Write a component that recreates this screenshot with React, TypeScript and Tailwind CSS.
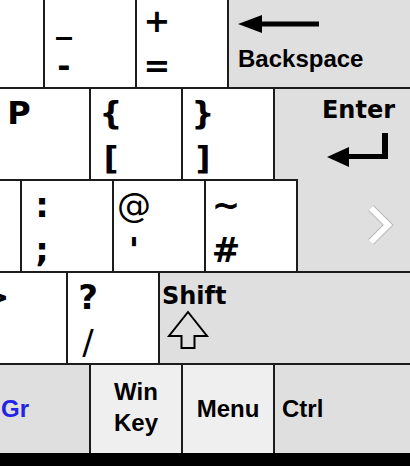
const dv = "font-['DejaVu_Sans',sans-serif]";
const ls = "font-['Liberation_Sans',Arial,sans-serif]";

type KeyProps = {
  top?: string;
  bottom?: string;
  size?: string;
  topClass?: string;
  bottomClass?: string;
  pad?: string;
  col?: string;
};

function SymbolLabels({
  top,
  bottom,
  size = 'text-[32px]',
  topClass = 'font-bold',
  bottomClass = 'font-bold',
  pad = 'pt-[8px]',
  col = 'w-[40px]',
}: KeyProps) {
  return (
    <div className={`${col} ${pad} ${dv} flex flex-col items-center gap-[13px] text-black`}>
      <span className={`h-[32px] leading-[32px] ${size} ${topClass}`}>{top}</span>
      <span className={`h-[32px] leading-[32px] ${size} ${bottomClass}`}>{bottom}</span>
    </div>
  );
}

function BackspaceArrow() {
  return (
    <svg width="82" height="20" viewBox="0 0 82 20">
      <polygon points="0,10 24,1 24,7.5 81,7.5 81,12.5 24,12.5 24,19" fill="#000" />
    </svg>
  );
}

function EnterArrow() {
  return (
    <svg width="62" height="36" viewBox="0 0 62 36">
      <polygon points="0,24 22,14 22,21 55,21 55,0 61,0 61,26 22,26 22,34" fill="#000" />
    </svg>
  );
}

function ShiftArrow() {
  return (
    <svg width="44" height="40" viewBox="0 0 44 40">
      <polygon
        points="22,2 41,26 28.5,26 28.5,38 15.5,38 15.5,26 3,26"
        fill="none"
        stroke="#000"
        strokeWidth="2"
        strokeLinejoin="miter"
      />
    </svg>
  );
}

function Chevron() {
  return (
    <svg width="28" height="42" viewBox="0 0 28 42">
      <polyline points="5,4 22,21 5,38" fill="none" stroke="#b9b9b9" strokeWidth="8" />
      <polyline points="5,4 22,21 5,38" fill="none" stroke="#fff" strokeWidth="6" />
    </svg>
  );
}

export default function App() {
  const line = 'border-[#1c1c1c]';

  return (
    <div className="w-[410px] h-[466px] overflow-hidden bg-white flex flex-col select-none">
      {/* row 1 */}
      <div className={`flex h-[89px] shrink-0 border-b-2 ${line}`}>
        <div className={`w-[45px] border-r-2 ${line} bg-white`} />
        <div className={`w-[92px] border-r-2 ${line} bg-white`}>
          <SymbolLabels top="_" bottom="-" pad="pt-[5px]" col="w-[38px]" />
        </div>
        <div className={`w-[92px] border-r-2 ${line} bg-white`}>
          <SymbolLabels top="+" bottom="=" pad="pt-[5px]" />
        </div>
        <div className="flex-1 bg-[#dfdfdf] flex flex-col pl-[9px] pt-[14px]">
          <BackspaceArrow />
          <span className={`${ls} mt-[13px] text-[24px] leading-none font-bold text-black`}>
            Backspace
          </span>
        </div>
      </div>

      {/* row 2 */}
      <div className="flex h-[90px] shrink-0">
        <div className={`w-[91px] border-r-2 ${line} bg-white`}>
          <div className={`w-[38px] pt-[8px] ${dv} flex flex-col items-center`}>
            <span className="h-[32px] leading-[32px] text-[32px] font-bold text-black">P</span>
          </div>
        </div>
        <div className={`w-[92px] border-r-2 ${line} bg-white`}>
          <SymbolLabels top="{" bottom="[" />
        </div>
        <div className={`w-[92px] border-r-2 ${line} bg-white`}>
          <SymbolLabels top="}" bottom="]" />
        </div>
        <div className="flex-1 bg-[#dfdfdf] flex flex-col items-end pr-[15px] pt-[9px]">
          <span className={`${dv} text-[24px] leading-none font-bold text-black`}>Enter</span>
          <div className="mt-[11px] mr-[6px]">
            <EnterArrow />
          </div>
        </div>
      </div>

      {/* row 3 */}
      <div className={`flex h-[94px] shrink-0 border-b-2 ${line}`}>
        <div className={`w-[22px] border-t-2 border-r-2 ${line} bg-white`} />
        <div className={`w-[92px] border-t-2 border-r-2 ${line} bg-white`}>
          <SymbolLabels top=":" bottom=";" size="text-[34px]" />
        </div>
        <div className={`w-[92px] border-t-2 border-r-2 ${line} bg-white`}>
          <SymbolLabels top="@" bottom="'" topClass="font-normal" size="text-[34px]" />
        </div>
        <div className={`w-[92px] border-t-2 border-r-2 ${line} bg-white`}>
          <SymbolLabels top="~" bottom="#" size="text-[34px]" />
        </div>
        <div className="flex-1 bg-[#dfdfdf] flex items-center justify-end pr-[16px]">
          <Chevron />
        </div>
      </div>

      {/* row 4 */}
      <div className={`flex h-[92px] shrink-0 border-b-2 ${line}`}>
        <div className={`w-[68px] border-r-2 ${line} bg-white`}>
          <SymbolLabels top=">" col="w-[40px] ml-[-24px]" />
        </div>
        <div className={`w-[92px] border-r-2 ${line} bg-white`}>
          <SymbolLabels top="?" bottom="/" bottomClass="font-normal" size="text-[34px]" />
        </div>
        <div className="flex-1 bg-[#dfdfdf] flex flex-col items-start pl-[2px] pt-[11px]">
          <span className={`${dv} text-[24px] leading-none font-bold text-black`}>Shift</span>
          <div className="mt-[2px] ml-[4px]">
            <ShiftArrow />
          </div>
        </div>
      </div>

      {/* row 5 */}
      <div className={`flex h-[88px] shrink-0 ${ls} text-[24px] font-bold text-black`}>
        <div className={`w-[91px] border-r-2 ${line} bg-[#dfdfdf] flex items-center pl-[1px]`}>
          <span className="leading-none text-[#2323e6]">Gr</span>
        </div>
        <div className={`w-[92px] border-r-2 ${line} bg-[#efefef] flex flex-col items-center justify-center pb-[5px]`}>
          <span className="leading-[31px]">Win</span>
          <span className="leading-[31px]">Key</span>
        </div>
        <div className={`w-[92px] border-r-2 ${line} bg-[#efefef] flex items-center justify-center`}>
          <span className="leading-none">Menu</span>
        </div>
        <div className="flex-1 bg-[#dfdfdf] flex items-center pl-[7px]">
          <span className="leading-none">Ctrl</span>
        </div>
      </div>

      <div className="flex-1 bg-black" />
    </div>
  );
}
